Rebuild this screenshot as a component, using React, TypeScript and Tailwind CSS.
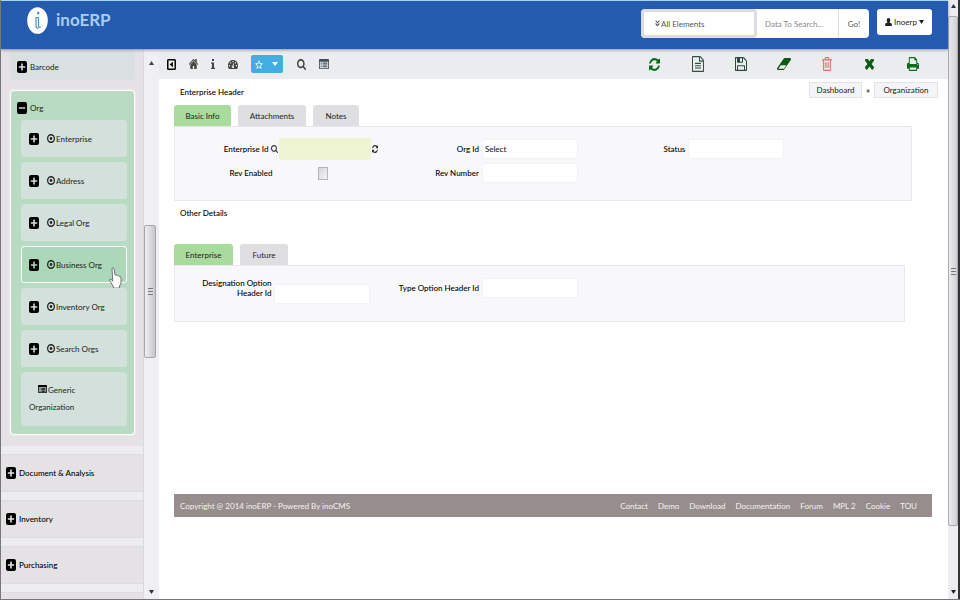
import React from 'react';
import clsx from 'clsx';

type IconProps = { className?: string };

const glyphs = {
  home: {
    box: '89 250 1614 1290',
    d: 'M1472 992v480q0 26-19 45t-45 19h-384v-384h-256v384h-384q-26 0-45-19t-19-45v-480q0-1 .5-3t.5-3l575-474 575 474q1 2 1 6zm223-69l-62 74q-8 9-21 11h-3q-13 0-21-7l-692-577-692 577q-12 8-24 7-13-2-21-11l-62-74q-8-10-7-23.5t11-21.5l719-599q32-26 76-26t76 26l244 204v-195q0-14 9-23t23-9h192q14 0 23 9t9 23v408l219 182q10 8 11 21.5t-7 23.5z',
  },
  close: {
    box: '300 470 1192 1100',
    d: 'M1490 1322q0 40-28 68l-136 136q-28 28-68 28t-68-28l-294-294-294 294q-28 28-68 28t-68-28l-136-136q-28-28-28-68t28-68l294-294-294-294q-28-28-28-68t28-68l136-136q28-28 68-28t68 28l294 294 294-294q28-28 68-28t68 28l136 136q28 28 28 68t-28 68l-294 294 294 294q28 28 28 68z',
  },
  search: {
    box: '64 128 1664 1664',
    d: 'M1216 832q0-185-131.5-316.5t-316.5-131.5-316.5 131.5-131.5 316.5 131.5 316.5 316.5 131.5 316.5-131.5 131.5-316.5zm512 832q0 52-38 90t-90 38q-54 0-90-38l-343-342q-179 124-399 124-143 0-273.5-55.5t-225-150-150-225-55.5-273.5 55.5-273.5 150-225 225-150 273.5-55.5 273.5 55.5 225 150 150 225 55.5 273.5q0 220-124 399l343 343q37 37 37 90z',
  },
  print: {
    box: '64 128 1664 1536',
    d: 'M448 1536h896v-256h-896v256zm0-640h896v-384h-160q-40 0-68-28t-28-68v-160h-640v640zm1152 64q0-26-19-45t-45-19-45 19-19 45 19 45 45 19 45-19 19-45zm128 0v416q0 13-9.5 22.5t-22.5 9.5h-224v160q0 40-28 68t-68 28h-960q-40 0-68-28t-28-68v-160h-224q-13 0-22.5-9.5t-9.5-22.5v-416q0-79 56.5-135.5t135.5-56.5h64v-544q0-40 28-68t68-28h672q40 0 88 20t76 48l152 152q28 28 48 76t20 88v256h64q79 0 135.5 56.5t56.5 135.5z',
  },
  trash: {
    box: '192 128 1408 1536',
    d: 'M704 736v576q0 14-9 23t-23 9h-64q-14 0-23-9t-9-23v-576q0-14 9-23t23-9h64q14 0 23 9t9 23zm256 0v576q0 14-9 23t-23 9h-64q-14 0-23-9t-9-23v-576q0-14 9-23t23-9h64q14 0 23 9t9 23zm256 0v576q0 14-9 23t-23 9h-64q-14 0-23-9t-9-23v-576q0-14 9-23t23-9h64q14 0 23 9t9 23zm128 724v-948h-896v948q0 22 7 40.5t14.5 27 10.5 8.5h832q3 0 10.5-8.5t14.5-27 7-40.5zm-672-1076h448l-48-117q-7-9-17-11h-317q-10 2-17 11zm928 32v64q0 14-9 23t-23 9h-96v948q0 83-47 143.5t-113 60.5h-832q-66 0-113-58.5t-47-141.5v-952h-96q-14 0-23-9t-9-23v-64q0-14 9-23t23-9h309l70-167q15-37 54-63t79-26h320q40 0 79 26t54 63l70 167h309q14 0 23 9t9 23z',
  },
  save: {
    box: '128 128 1536 1536',
    d: 'M512 1536h768v-384h-768v384zm896 0h128v-896q0-14-10-38.5t-20-34.5l-281-281q-10-10-34-20t-39-10v416q0 40-28 68t-68 28h-576q-40 0-68-28t-28-68v-416h-128v1280h128v-416q0-40 28-68t68-28h832q40 0 68 28t28 68v416zm-384-928v-320q0-13-9.5-22.5t-22.5-9.5h-192q-13 0-22.5 9.5t-9.5 22.5v320q0 13 9.5 22.5t22.5 9.5h192q13 0 22.5-9.5t9.5-22.5zm640 32v928q0 40-28 68t-68 28h-1344q-40 0-68-28t-28-68v-1344q0-40 28-68t68-28h928q40 0 88 20t76 48l280 280q28 28 48 76t20 88z',
  },
  file: {
    box: '128 0 1536 1792',
    d: 'M1596 380q28 28 48 76t20 88v1152q0 40-28 68t-68 28h-1344q-40 0-68-28t-28-68v-1600q0-40 28-68t68-28h896q40 0 88 20t76 48zm-444-244v376h376q-10-29-22-41l-313-313q-12-12-41-22zm384 1528v-1024h-416q-40 0-68-28t-28-68v-416h-768v1536h1280zm-1024-864q0-14 9-23t23-9h704q14 0 23 9t9 23v64q0 14-9 23t-23 9h-704q-14 0-23-9t-9-23v-64zm736 224q14 0 23 9t9 23v64q0 14-9 23t-23 9h-704q-14 0-23-9t-9-23v-64q0-14 9-23t23-9h704zm0 256q14 0 23 9t9 23v64q0 14-9 23t-23 9h-704q-14 0-23-9t-9-23v-64q0-14 9-23t23-9h704z',
  },
  refresh: {
    box: '128 128 1536 1536',
    d: 'M1639 1056q0 5-1 7-64 268-268 434.5t-478 166.5q-146 0-282.5-55t-243.5-157l-129 129q-19 19-45 19t-45-19-19-45v-448q0-26 19-45t45-19h448q26 0 45 19t19 45-19 45l-137 137q71 66 161 102t187 36q134 0 250-65t186-179q11-17 53-117 8-23 30-23h192q13 0 22.5 9.5t9.5 22.5zm25-800v448q0 26-19 45t-45 19h-448q-26 0-45-19t-19-45 19-45l138-138q-148-137-349-137-134 0-250 65t-186 179q-11 17-53 117-8 23-30 23h-199q-13 0-22.5-9.5t-9.5-22.5v-7q65-268 270-434.5t480-166.5q146 0 284 55.5t245 156.5l130-129q19-19 45-19t45 19 19 45z',
  },
  eraser: {
    box: '0 256 1920 1280',
    d: 'M960 1408l336-384h-768l-336 384h768zM1909 331q15 34 9.5 71.5t-30.5 65.5l-896 1024q-38 44-96 44h-768q-38 0-69.5-20.5t-47.5-54.5q-15-34-9.5-71.5t30.5-65.5l896-1024q38-44 96-44h768q38 0 69.5 20.5t47.5 54.5z',
  },
  plus: {
    box: '0 0 10 12',
    d: 'M2 0h6q2 0 2 2v8q0 2-2 2h-6q-2 0-2-2v-8q0-2 2-2zM4.2 2.6v2.6h-2.4v1.6h2.4v2.6h1.6v-2.6h2.4v-1.6h-2.4v-2.6z',
  },
  minus: {
    box: '0 0 10 12',
    d: 'M2 0h6q2 0 2 2v8q0 2-2 2h-6q-2 0-2-2v-8q0-2 2-2zM1.8 5.2v1.6h6.4v-1.6z',
  },
  target: {
    box: '0 0 14 16',
    d: 'M7 0a7 8 0 1 0 0 16a7 8 0 1 0 0-16zM7 2.6a4.8 5.4 0 1 1 0 10.8a4.8 5.4 0 1 1 0-10.8zM7 5.4a2.3 2.6 0 1 0 0 5.2a2.3 2.6 0 1 0 0-5.2z',
  },
  list: {
    box: '0 0 18 18',
    d: 'M1.500 0h15q1.500 0 1.500 1.500v15q0 1.500-1.500 1.500h-15q-1.500 0-1.500-1.500v-15q0-1.500 1.500-1.500zM1.500 5v11.500h15v-11.500zM3 6.500h2v2h-2zM6.500 6.500h8.500v2h-8.500zM3 9.800h2v2h-2zM6.500 9.800h8.500v2h-8.500zM3 13h2v2h-2zM6.500 13h8.500v2h-8.500z',
  },
  collapse: {
    box: '0 0 18 22',
    d: 'M3 0h12q3 0 3 3v16q0 3-3 3h-12q-3 0-3-3v-16q0-3 3-3zM3 3.200v15.600h12v-15.600zM11.800 5.500v11l-6.300-5.500z',
  },
  info: {
    box: '0 0 8 20',
    d: 'M2 0h4v4h-4zM0 7h6v10.500h2v2.500h-8v-2.500h2v-8h-2z',
  },
  gauge: {
    box: '0 0 20 18',
    d: 'M10 0c6 0 10 5 10 11q0 4-1.800 7h-16.400q-1.800-3-1.800-7c0-6 4-11 10-11zM8.900 2v2.600h2.200v-2.600zM4 4.600v2.600h2.400v-2.600zM13.600 4.600v2.600h2.400v-2.600zM1.900 10v2.600h2.400v-2.600zM15.700 10v2.600h2.400v-2.600zM10.400 6.600l-1.600 5.200q-2 .8-1.600 2.800q.8 1.600 2.800 1.600q2.400-.4 2.400-2.400q-.2-1.400-1.600-2l1.200-4.800z',
  },
  star: {
    box: '0 0 20 20',
    d: 'M10 0l3 6.500 7 1-5 5 1.200 7.500-6.200-3.600-6.200 3.600 1.200-7.500-5-5 7-1zM10 4.200l-1.800 4-4.200.7 3 3-.8 4.500 3.800-2.200 3.800 2.200-.8-4.500 3-3-4.200-.7z',
  },
  user: {
    box: '0 0 14 16',
    d: 'M7 0q3.600.2 3.600 4.200q-.2 3.600-1.600 4.600q5 .4 5 5.200q0 2-1.800 2h-10.400q-1.800 0-1.800-2q0-4.800 5-5.200q-1.400-1-1.600-4.600q0-4 3.600-4.200z',
  },
  up: { box: '0 0 10 8', d: 'M5 0l5 8h-10z' },
  down: { box: '0 0 10 8', d: 'M0 0h10l-5 8z' },
};

type GlyphName = keyof typeof glyphs;

const Glyph = ({ name, className }: IconProps & { name: GlyphName }) => (
  <svg viewBox={glyphs[name].box} preserveAspectRatio="none" fill="currentColor" aria-hidden="true" className={clsx('shrink-0', className)}>
    <path fillRule="evenodd" d={glyphs[name].d} />
  </svg>
);

const DoubleChevron = ({ className }: IconProps) => (
  <svg viewBox="0 0 8 10" preserveAspectRatio="none" fill="none" stroke="currentColor" strokeWidth="1.6" aria-hidden="true" className={className}>
    <path d="M1 1l3 3 3-3M1 5l3 3 3-3" />
  </svg>
);

const Logo = () => (
  <svg viewBox="0 0 21 27" aria-hidden="true" className="h-[27px] w-[21px]">
    <ellipse cx="10.500" cy="13.500" rx="10.300" ry="13.300" fill="#fff" />
    <ellipse cx="11.200" cy="6" rx="1.200" ry="1.500" fill="#4b8fd0" />
    <path d="M8.500 10.500h3v8.500q0 1.600 2.300 1.200M9 10.500v8q0 3 2.500 3" fill="none" stroke="#4b8fd0" strokeWidth="1.200" />
  </svg>
);

const Pointer = ({ className }: IconProps) => (
  <svg viewBox="0 0 13 22" aria-hidden="true" className={className}>
    <path
      d="M3 1.500q1-1.500 2 0l1.200 6.800 1-.6 1.200 1 1.100-.4.900 1.200q1.600-.4 1.600 1.600v5l-1.500 3v2h-6l-.5-2.200-3.200-5.400q-.4-1.600 1.200-1.300l1.800 2z"
      fill="#fff"
      stroke="#555"
      strokeWidth=".8"
    />
  </svg>
);

const orgItems = ['Enterprise', 'Address', 'Legal Org', 'Business Org', 'Inventory Org', 'Search Orgs'];
const modules = ['Document & Analysis', 'Inventory', 'Purchasing'];
const footerLinks = ['Contact', 'Demo', 'Download', 'Documentation', 'Forum', 'MPL 2', 'Cookie', 'TOU'];

const actions: { name: GlyphName; label: string; style: string }[] = [
  { name: 'refresh', label: 'Refresh', style: 'h-[13px] w-[11px] text-[#0b6b1c]' },
  { name: 'file', label: 'New', style: 'h-4 w-3 text-[#35503f]' },
  { name: 'save', label: 'Save', style: 'h-[14px] w-3 text-[#2b4a38]' },
  { name: 'eraser', label: 'Clear', style: 'h-3 w-[14px] text-[#0b5a14]' },
  { name: 'trash', label: 'Delete', style: 'h-[14px] w-[10px] text-[#dd6b66]' },
  { name: 'close', label: 'Remove', style: 'h-[11px] w-[9px] text-[#0b5a14]' },
  { name: 'print', label: 'Print', style: 'h-[14px] w-3 text-[#0b6b1c]' },
];

const Header = () => (
  <header className="relative z-10 flex h-[49px] shrink-0 justify-between border-t border-[#a9d3ee] bg-[#245bae] shadow-[0_1px_3px_#8a8f99]">
    <a href="#" className="flex items-start gap-2 pl-[26px] pt-[6px] text-[17px] font-bold text-[#a9cdf0]">
      <Logo />
      <span className="leading-[26px]">inoERP</span>
    </a>
    <div className="flex items-start gap-2 pr-4 pt-2">
      <form className="flex h-[29px] overflow-hidden rounded-sm bg-white text-[#555]">
        <div className="relative">
          <select aria-label="Elements" className="h-full w-[116px] appearance-none rounded-sm border-3 border-[#dcdde3] bg-white pl-[17px] outline-none">
            <option>All Elements</option>
          </select>
          <DoubleChevron className="absolute left-[14px] top-[11px] h-[7px] w-[5px]" />
        </div>
        <input aria-label="Data to search" placeholder="Data To Search..." className="w-[82px] border-r border-[#ddd] pl-2 outline-none placeholder:text-[#888]" />
        <button type="button" className="w-[30px]">Go!</button>
      </form>
      <button type="button" className="flex h-[26px] w-[55px] items-center justify-center gap-[2px] rounded-[3px] bg-white text-[#222]">
        <Glyph name="user" className="h-2 w-[7px]" />
        Inoerp
        <Glyph name="down" className="h-1 w-[5px]" />
      </button>
    </div>
  </header>
);

const Sidebar = () => (
  <nav className="flex w-[143px] shrink-0 flex-col gap-2 overflow-hidden border-r border-[#d9d9dc] bg-[#ededf0] text-[#222]">
    <div className="shrink-0 bg-[#e4e2e4] pb-[11px] pl-[9px] pr-2">
      <a href="#" className="mb-[10px] flex h-[31px] items-center gap-[3px] rounded-b-sm bg-[#d9e0df] pl-[7px] pt-1">
        <Glyph name="plus" className="h-3 w-[10px] text-black" />
        Barcode
      </a>
      <section className="rounded-sm border border-white bg-[#b9dac3] pb-2 pl-[10px] pr-[7px] pt-[9px] shadow-[0_0_2px_#fff]">
        <a href="#" className="-ml-1 mb-[5px] flex h-[15px] items-center gap-[3px]">
          <Glyph name="minus" className="h-3 w-[10px] text-black" />
          Org
        </a>
        <ul className="flex flex-col gap-[5px]">
          {orgItems.map((item) => (
            <li key={item} className="relative">
              <a
                href="#"
                className={clsx(
                  'flex h-[37px] items-center rounded-[3px] border pl-[7px]',
                  item === 'Business Org' ? 'border-white bg-[#abd8b8]' : 'border-[#d3e2da] bg-[#d3e0db]'
                )}
              >
                <Glyph name="plus" className="mr-2 h-3 w-[10px] text-black" />
                <Glyph name="target" className="mr-px h-[9px] w-2 text-[#222]" />
                {item}
              </a>
              {item === 'Business Org' && <Pointer className="absolute right-[5px] top-[21px] h-[22px] w-[13px]" />}
            </li>
          ))}
          <li>
            <a href="#" className="block h-[54px] rounded-sm bg-[#d3e0db] pl-2 pt-[10px] leading-[17px]">
              <Glyph name="list" className="ml-[9px] mr-px inline-block h-2 w-[9px] align-baseline text-black" />
              Generic
              <br />
              Organization
            </a>
          </li>
        </ul>
      </section>
    </div>
    {modules.map((module) => (
      <a key={module} href="#" className="flex h-[38px] shrink-0 items-center gap-[3px] border-y border-[#dedcde] bg-[#e4e2e4] pl-[5px] font-medium text-black">
        <Glyph name="plus" className="h-3 w-[10px]" />
        {module}
      </a>
    ))}
    <div className="h-[38px] shrink-0 border-t border-[#dedcde] bg-[#e4e2e4]" />
  </nav>
);

const Grip = () => <span className="h-[7px] w-[5px] border-y border-[#777] bg-[linear-gradient(#ddd_2px,#777_2px,#777_3px,#ddd_3px)]" />;

const SidebarScroll = () => (
  <div className="flex w-[15px] shrink-0 flex-col items-center bg-[#f0eff3]">
    <Glyph name="up" className="mb-2 mt-[12px] h-1 w-[5px] text-[#444]" />
    <div className="grow-[153] basis-0" />
    <div className="mr-[3px] flex w-3 grow-[132] basis-0 items-center justify-center rounded-xs border border-[#a5a5aa] bg-linear-to-r from-[#f0f0f3] to-[#c6c6cc]">
      <Grip />
    </div>
    <div className="grow-[229] basis-0" />
    <Glyph name="down" className="mb-[5px] mt-1 h-1 w-[5px] text-[#333]" />
  </div>
);

const PageScroll = () => (
  <div className="flex w-[12px] shrink-0 flex-col items-center border-r-2 border-[#333] bg-[#ededf1]">
    <Glyph name="up" className="mb-2 mt-1 h-1 w-[5px] text-[#333]" />
    <div className="flex w-full grow-[510] basis-0 items-center justify-center rounded-xs border border-[#a9a9ae] bg-linear-to-r from-[#ededf0] to-[#cfcfd5]">
      <Grip />
    </div>
    <div className="grow-[60] basis-0" />
    <Glyph name="down" className="mb-[5px] mt-1 h-1 w-[5px] text-[#222]" />
  </div>
);

const Toolbar = () => (
  <div className="flex h-[30px] shrink-0 items-center justify-between bg-[#ebecee] pr-[14px] text-[#444]">
    <div className="flex items-center pl-[8px]">
      <button type="button" aria-label="Collapse" className="mr-[13px]"><Glyph name="collapse" className="h-[11px] w-[9px] text-black" /></button>
      <button type="button" aria-label="Home" className="mr-[13px]"><Glyph name="home" className="h-[10px] w-[9px]" /></button>
      <button type="button" aria-label="Info" className="mr-[13px]"><Glyph name="info" className="h-[10px] w-1" /></button>
      <button type="button" aria-label="Dashboard" className="mr-[13px]"><Glyph name="gauge" className="h-[9px] w-[10px]" /></button>
      <button type="button" aria-label="Favourites" className="mr-[14px] flex h-[18px] w-8 items-center justify-between rounded-xs bg-[#42ade2] pl-1 pr-[5px] text-white">
        <Glyph name="star" className="h-[9px] w-2" />
        <Glyph name="down" className="h-1 w-[6px]" />
      </button>
      <button type="button" aria-label="Search" className="mr-[13px]"><Glyph name="search" className="h-[11px] w-[9px]" /></button>
      <button type="button" aria-label="List"><Glyph name="list" className="h-[10px] w-[10px] text-[#3f4f5c]" /></button>
    </div>
    <div className="flex">
      {actions.map((action) => (
        <button key={action.name} type="button" aria-label={action.label} className="flex h-5 w-[43px] items-center justify-center">
          <Glyph name={action.name} className={action.style} />
        </button>
      ))}
    </div>
  </div>
);

const Tab = ({ label, active, className }: { label: string; active?: boolean; className: string }) => (
  <button type="button" role="tab" aria-selected={!!active} className={clsx('h-[21px] rounded-t-[3px] text-[#222]', active ? 'bg-[#a9db9c]' : 'bg-[#dfdfe1]', className)}>
    {label}
  </button>
);

const field = 'h-5 w-24 rounded-xs border border-[#f3f2f6] bg-white px-[2px] text-[#222] outline-none';
const row = 'flex h-6 items-center justify-end gap-[3px]';

const BasicInfo = () => (
  <div className="mr-5 grid h-[75px] grid-cols-[204fr_200fr_207fr_127fr] border border-t-[#e6e6ea] border-[#e9e8ec] bg-[#f8f7fa] pt-[10px] font-medium text-black">
    <div>
      <div className={row}>
        <label htmlFor="enterprise-id">Enterprise Id</label>
        <Glyph name="search" className="h-2 w-[7px] text-[#333]" />
        <input id="enterprise-id" className="-mx-[2px] h-[22px] w-[92px] rounded-xs bg-[#eff5d2] outline-none" />
        <Glyph name="refresh" className="h-2 w-[6px] text-[#333]" />
      </div>
      <div className={clsx(row, 'pr-[50px]')}>
        <label htmlFor="rev-enabled" className="mr-[43px]">Rev Enabled</label>
        <input id="rev-enabled" type="checkbox" className="h-[13px] w-[10px] appearance-none border border-[#b5b5b9] bg-linear-to-br from-[#d5d5d9] to-[#f5f5f7]" />
      </div>
    </div>
    <div>
      <div className={row}>
        <label htmlFor="org-id">Org Id</label>
        <select id="org-id" className={clsx(field, 'appearance-none')}>
          <option>Select</option>
        </select>
      </div>
      <div className={row}>
        <label htmlFor="rev-number">Rev Number</label>
        <input id="rev-number" className={field} />
      </div>
    </div>
    <div>
      <div className={row}>
        <label htmlFor="status">Status</label>
        <input id="status" className={field} />
      </div>
    </div>
  </div>
);

const OtherDetails = () => (
  <div className="mr-[27px] grid h-[57px] grid-cols-[196fr_208fr_327fr] border border-[#e9e8ec] bg-[#f8f7fa] pt-[10px] font-medium text-black">
    <div className="flex h-7 items-start justify-end gap-[3px]">
      <label htmlFor="designation" className="w-20 pt-[2px] text-right leading-[10px]">Designation Option Header Id</label>
      <input id="designation" className={clsx(field, 'self-end')} />
    </div>
    <div className={row}>
      <label htmlFor="type-option">Type Option Header Id</label>
      <input id="type-option" className={field} />
    </div>
  </div>
);

const App = () => {
  return (
    <div className="flex h-screen w-full overflow-hidden border-b border-l border-[#777] bg-white font-[Lato,sans-serif] text-[8px] leading-3">
      <div className="flex min-w-0 flex-1 flex-col">
        <Header />
        <div className="flex min-h-0 flex-1">
          <Sidebar />
          <SidebarScroll />
          <main className="flex min-w-0 flex-1 flex-col">
            <Toolbar />
            <div className="flex flex-col pl-[15px] pr-4 pt-[3px]">
              <div className="flex h-[23px] items-start justify-between pl-[6px]">
                <h1 className="pt-1 font-medium text-black">Enterprise Header</h1>
                <div className="-mr-[6px] flex items-center gap-[3px] text-[#222]">
                  <a href="#" className="flex h-4 w-[53px] items-center justify-center border border-[#e3e3e6] bg-[#f5f5f7]">Dashboard</a>
                  <span className="w-[6px] text-center font-bold">»</span>
                  <a href="#" className="flex h-4 w-16 items-center justify-center border border-[#e3e3e6] bg-[#f5f5f7]">Organization</a>
                </div>
              </div>
              <div role="tablist" className="flex gap-[7px]">
                <Tab label="Basic Info" active className="w-[57px]" />
                <Tab label="Attachments" className="w-[68px]" />
                <Tab label="Notes" className="w-[46px]" />
              </div>
              <BasicInfo />
              <h2 className="mb-[25px] ml-[6px] mt-[6px] font-medium text-black">Other Details</h2>
              <div role="tablist" className="flex gap-[7px]">
                <Tab label="Enterprise" active className="w-[59px]" />
                <Tab label="Future" className="w-[48px]" />
              </div>
              <OtherDetails />
              <footer className="mt-[172px] flex h-[23px] items-center justify-between bg-[#978d8d] pl-[6px] pr-[15px] text-[#f4f2f2]">
                <span>Copyright @ 2014 inoERP - Powered By inoCMS</span>
                <div className="flex gap-[10px]">
                  {footerLinks.map((link) => (
                    <a key={link} href="#">{link}</a>
                  ))}
                </div>
              </footer>
            </div>
          </main>
        </div>
      </div>
      <PageScroll />
    </div>
  );
};

export default App;
